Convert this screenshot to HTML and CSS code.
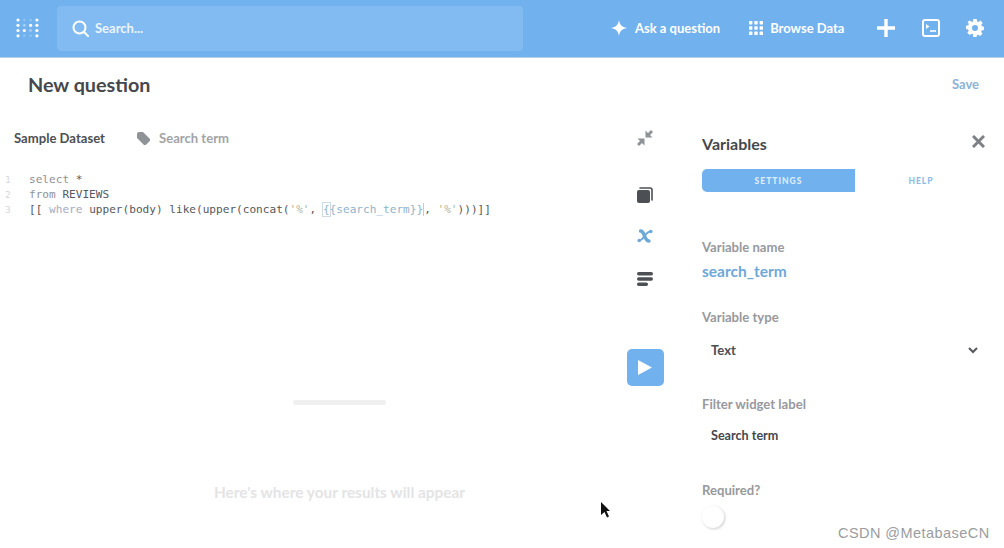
FILE: index.html
```html
<!DOCTYPE html>
<html lang="en">
<head>
<meta charset="utf-8">
<title>New question</title>
<link rel="stylesheet" href="styles.css">
</head>
<body>
<div class="page">
  <header class="nav">
    <svg class="logo" width="24" height="24" viewBox="0 0 24 24" fill="#fff">
      <g><circle cx="2" cy="3" r="1.600"/><circle cx="2" cy="8.300" r="1.600"/><circle cx="2" cy="13.500" r="1.600"/><circle cx="2" cy="18.800" r="1.600"/>
      <circle cx="8.300" cy="8.300" r="1.300" opacity=".45"/><circle cx="8.300" cy="13.500" r="1.600"/><circle cx="8.300" cy="3" r="1.200" opacity=".25"/><circle cx="8.300" cy="18.800" r="1.200" opacity=".25"/>
      <circle cx="14.600" cy="8.300" r="1.600"/><circle cx="14.600" cy="13.500" r="1.300" opacity=".45"/><circle cx="14.600" cy="3" r="1.200" opacity=".25"/><circle cx="14.600" cy="18.800" r="1.200" opacity=".25"/>
      <circle cx="20.900" cy="3" r="1.600"/><circle cx="20.900" cy="8.300" r="1.600"/><circle cx="20.900" cy="13.500" r="1.600"/><circle cx="20.900" cy="18.800" r="1.600"/></g>
    </svg>
    <div class="search">
      <svg width="17" height="17" viewBox="0 0 17 17" fill="none" stroke="#fff" stroke-width="2"><circle cx="7.500" cy="7.500" r="6"/><path d="M12 12l4 4" stroke-linecap="round"/></svg>
      <span>Search...</span>
    </div>
    <div class="nav-item ask">
      <svg width="16" height="16" viewBox="0 0 16 16" fill="#fff"><path d="M8 0c.6 4.600 2.600 7 8 8-5.400 1-7.400 3.400-8 8-.6-4.600-2.600-7-8-8 5.400-1 7.400-3.400 8-8z"/></svg>
      <span>Ask a question</span>
    </div>
    <div class="nav-item browse">
      <svg width="14" height="14" viewBox="0 0 14 14" fill="#fff"><rect width="3.400" height="3.400" rx=".6"/><rect x="5.300" width="3.400" height="3.400" rx=".6"/><rect x="10.600" width="3.400" height="3.400" rx=".6"/><rect y="5.300" width="3.400" height="3.400" rx=".6"/><rect x="5.300" y="5.300" width="3.400" height="3.400" rx=".6"/><rect x="10.600" y="5.300" width="3.400" height="3.400" rx=".6"/><rect y="10.600" width="3.400" height="3.400" rx=".6"/><rect x="5.300" y="10.600" width="3.400" height="3.400" rx=".6"/><rect x="10.600" y="10.600" width="3.400" height="3.400" rx=".6"/></svg>
      <span>Browse Data</span>
    </div>
    <svg class="nav-icon plus" width="18" height="18" viewBox="0 0 18 18" fill="#fff"><path d="M7.300 0h3.400v7.300H18v3.400h-7.300V18H7.300v-7.300H0V7.300h7.300z"/></svg>
    <svg class="nav-icon term" width="18" height="18" viewBox="0 0 18 18" fill="none" stroke="#fff" stroke-width="2"><rect x="1" y="1" width="16" height="16" rx="2"/><path d="M4 5l3.500 2.500L4 10z" fill="#fff" stroke="none"/><path d="M8 12h6" stroke-width="1.600"/></svg>
    <svg class="nav-icon gear" width="18" height="18" viewBox="0 0 18 18" fill="#fff"><path fill-rule="evenodd" d="M7.300 0h3.400l.4 2.400 1.300.6 2-1.400 2.300 2.400-1.400 2 .6 1.300 2.100.4v3.400l-2.300.4-.6 1.300 1.400 2-2.400 2.300-2-1.400-1.300.6-.3 2.300H7.300L7 15.300l-1.300-.6-2 1.400-2.400-2.300 1.400-2-.6-1.300-2.100-.4V6.700l2.300-.4.6-1.300-1.400-2L3.800 1.600l2 1.400L7 2.400zM9 6a3 3 0 1 0 0 6 3 3 0 0 0 0-6z"/></svg>
  </header>

  <div class="title-row">
    <h1>New question</h1>
    <a class="save">Save</a>
  </div>

  <main class="workspace">
    <section class="editor">
      <div class="db-row">
        <span class="db">Sample Dataset</span>
        <svg class="tag" width="13" height="13" viewBox="0 0 13 13" fill="#8f9296"><path d="M0 2a2 2 0 0 1 2-2h4l6.500 6.500a2 2 0 0 1 0 2.800l-3.200 3.200a2 2 0 0 1-2.800 0L0 6z"/></svg>
        <span class="tag-label">Search term</span>
      </div>
      <div class="code">
        <div class="line"><span class="num">1</span><span class="src"><span class="kw">select</span> *</span></div>
        <div class="line"><span class="num">2</span><span class="src"><span class="kw">from</span> REVIEWS</span></div>
        <div class="line"><span class="num">3</span><span class="src">[[ <span class="kw2">where</span> upper(body) like(upper(concat(<span class="str">'%'</span>, <span class="var"><span class="brace">{</span>{search_term}}</span><span class="caret"></span>, <span class="str">'%'</span>)))]]</span></div>
      </div>
      <div class="results">
        <div class="handle"></div>
        <p class="empty">Here's where your results will appear</p>
      </div>
    </section>

    <aside class="rail">
      <svg class="rail-collapse" width="16" height="16" viewBox="0 0 16 16" fill="#8f9296"><path d="M8.500.5v7h7L13 5l3-3-2-2-3 3zM7.500 15.500v-7h-7L3 11l-3 3 2 2 3-3z"/></svg>
      <svg class="rail-book" width="16" height="16" viewBox="0 0 16 16"><path d="M3 1h10a2 2 0 0 1 2 2v10" fill="none" stroke="#4c4f53" stroke-width="1.600" stroke-linecap="round"/><rect y="3" width="13" height="13" rx="2" fill="#4c4f53"/></svg>
      <svg class="rail-x" width="16" height="16" viewBox="0 0 16 16" fill="none" stroke="#6ea8d9"><path d="M3.500 3C6 3 6.500 5.500 7.500 8s2 5 4.500 5" stroke-width="3.400" stroke-linecap="round"/><path d="M13.500 3.500C11 3.500 9 6 7.500 8S5 12.500 2.500 12.500" stroke-width="2" stroke-linecap="round"/><circle cx="13.800" cy="3.500" r="1.800" fill="#6ea8d9" stroke="none"/><circle cx="2.200" cy="12.500" r="1.800" fill="#6ea8d9" stroke="none"/></svg>
      <svg class="rail-lines" width="16" height="14" viewBox="0 0 16 14" fill="#4c4f53"><rect width="16" height="3.400" rx="1.700"/><rect y="5.300" width="16" height="3.400" rx="1.700"/><rect y="10.600" width="11" height="3.400" rx="1.700"/></svg>
      <button class="play"><svg width="14" height="15" viewBox="0 0 14 15" fill="#fff"><path d="M0 0l14 7.500L0 15z"/></svg></button>
    </aside>

    <aside class="vars">
      <div class="vars-head">
        <h2>Variables</h2>
        <svg class="close" width="13" height="13" viewBox="0 0 13 13" stroke="#7d8085" stroke-width="3" fill="none"><path d="M1 1l11 11M12 1L1 12"/></svg>
      </div>
      <div class="tabs">
        <div class="tab active">SETTINGS</div>
        <div class="tab">HELP</div>
      </div>
      <div class="field name-field">
        <label>Variable name</label>
        <div class="var-name">search_term</div>
      </div>
      <div class="field type-field">
        <label>Variable type</label>
        <div class="select">
          <span>Text</span>
          <svg width="10" height="7" viewBox="0 0 10 7" fill="none" stroke="#55585c" stroke-width="2"><path d="M1 1l4 4 4-4"/></svg>
        </div>
      </div>
      <div class="field widget-field">
        <label>Filter widget label</label>
        <div class="value">Search term</div>
      </div>
      <div class="field req-field">
        <label>Required?</label>
        <div class="toggle"></div>
      </div>
    </aside>
  </main>

  <svg class="cursor" width="10" height="16" viewBox="0 0 10 16" fill="#111"><path d="M0 0l9 9H5.500L8 14.500 6 15.500 3.500 10 0 13z"/></svg>
  <div class="watermark">CSDN @MetabaseCN</div>
</div>
</body>
</html>
```

FILE: styles.css
```css
* { box-sizing: border-box; }
html, body { margin: 0; height: 100%; }
body { background: #fff; font-family: Lato, "Noto Sans", sans-serif; color: #4c4f53; overflow: hidden; }
.page { position: relative; width: 1004px; height: 548px; overflow: hidden; display: flex; flex-direction: column; }

.nav { height: 58px; flex: none; background: #71b1ee; border-bottom: 1px solid #b5cfe9; display: flex; align-items: center; padding: 0 0 1px 16px; color: #fff; font-weight: 700; font-size: 13px; }
.logo { margin-top: 1px; flex: none; }
.search { width: 466px; height: 45px; margin-left: 17px; background: #82bbf1; border-radius: 4px; display: flex; align-items: center; padding-left: 15px; gap: 6px; }
.search span { opacity: .85; }
.nav-item { display: flex; align-items: center; }
.ask { margin-left: 88px; gap: 8px; }
.browse { margin-left: 29px; gap: 7px; }
.nav-icon { flex: none; }
.plus { margin-left: 33px; }
.term { margin-left: 27px; }
.gear { margin-left: 26px; }

.title-row { height: 55px; flex: none; display: flex; align-items: center; justify-content: space-between; padding: 0 25px 4px 28px; }
h1 { margin: 0; font-size: 19.800px; font-weight: 700; color: #45484c; }
.save { font-size: 13px; font-weight: 700; color: #8cb3d6; }

.workspace { flex: 1; display: flex; min-height: 0; }

.editor { width: 626px; flex: none; display: flex; flex-direction: column; }
.db-row { height: 50px; flex: none; display: flex; align-items: center; padding: 0 0 0 14px; font-size: 13.100px; font-weight: 700; }
.db { color: #4c4f53; }
.tag { margin-left: 32px; }
.tag-label { margin-left: 9px; color: #a2a4a8; }
.code { margin-top: 9px; font-family: "DejaVu Sans Mono", monospace; font-size: 11.100px; line-height: 15px; color: #55585c; }
.line { display: flex; white-space: pre; }
.num { width: 29px; padding-left: 5px; color: #d6d7d9; flex: none; font-size: 9.500px; }
.kw { color: #8f9296; }
.kw2 { color: #a5abc4; }
.str { color: #b0b49a; }
.var { color: #8fb2cc; }
.brace { outline: 1px solid #cfdbe4; }
.caret { display: inline-block; width: 1px; height: 13px; background: #c5cdd3; vertical-align: -3px; }
.results { flex: 1; display: flex; flex-direction: column; align-items: center; padding-left: 53px; }
.handle { width: 93px; height: 5px; margin-top: 183px; background: #f0f0f0; border-radius: 2px; }
.empty { margin: 77px 0 0; font-size: 15.400px; font-weight: 700; color: #e4e4e5; line-height: 20px; }

.rail { width: 38px; flex: none; display: flex; flex-direction: column; align-items: center; }
.rail-collapse { margin-top: 17px; flex: none; }
.rail-book { margin-top: 41px; flex: none; }
.rail-x { margin-top: 25px; flex: none; }
.rail-lines { margin-top: 28px; flex: none; }
.play { margin-top: 63px; width: 37px; height: 37px; padding: 0; border: 0; border-radius: 5px; background: #71b1ee; display: flex; align-items: center; justify-content: center; flex: none; }

.vars { flex: 1; margin-left: 38px; padding-right: 19px; display: flex; flex-direction: column; }
.vars-head { height: 36px; margin-top: 12px; display: flex; align-items: center; justify-content: space-between; }
.close { margin-top: -3px; }
h2 { margin: 0; font-size: 16px; font-weight: 700; color: #45484c; }
.tabs { display: flex; height: 23px; margin-top: 8px; margin-right: -2px; }
.tab { flex: 1; display: flex; align-items: center; justify-content: center; font-size: 8.500px; font-weight: 900; letter-spacing: 1px; color: #8fbde8; }
.tab.active { flex: none; width: 153px; background: #71b1ee; color: #dcecfb; border-radius: 5px 0 0 5px; }
label { display: block; font-size: 13.100px; font-weight: 700; color: #97999d; line-height: 16px; }
.field { display: flex; flex-direction: column; }
.name-field { margin-top: 47px; }
.var-name { margin-top: 6px; font-size: 15.500px; font-weight: 700; color: #6ea8d9; line-height: 20px; }
.type-field { margin-top: 28px; }
.select { margin-top: 15px; height: 20px; padding: 0 7px 0 9px; display: flex; align-items: center; justify-content: space-between; font-size: 13.100px; font-weight: 700; color: #4c4f53; }
.widget-field { margin-top: 36px; }
.value { margin-top: 16px; padding-left: 9px; font-size: 12.600px; font-weight: 700; color: #45484c; line-height: 16px; }
.req-field { margin-top: 38px; }
.toggle { width: 22px; height: 22px; margin-top: 8px; border-radius: 50%; background: #fff; box-shadow: 1px 1px 3px rgba(0,0,0,.2); }

.cursor { position: absolute; left: 601px; top: 502px; }
.watermark { position: absolute; left: 838px; top: 525px; font-family: "Liberation Sans", sans-serif; font-size: 14.500px; color: #9a9c9f; letter-spacing: .45px; }
```
